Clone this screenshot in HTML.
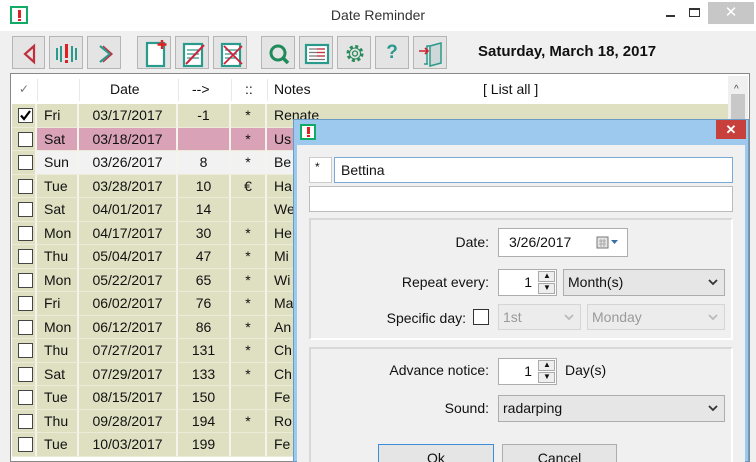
<!DOCTYPE html>
<html style="width:756px;height:462px;overflow:hidden"><head><meta charset="utf-8"><style>
*{box-sizing:border-box;margin:0;padding:0}
body{width:756px;height:462px;overflow:hidden;background:#f0f0f0;font-family:"Liberation Sans",sans-serif;font-size:14px;color:#111;position:relative}
.a{position:absolute}
.btn{position:absolute;top:36px;height:33px;background:#e4e4e4;border:1px solid #b5b5b5}
.btn svg{position:absolute;left:0;top:0}
.row{position:absolute;left:12px;width:716px;height:23.5px;background:#dfdfc2}
.row div{position:absolute;top:0;height:23.5px;line-height:23.5px;border-right:2px solid #f4f4ec;border-bottom:1px solid #ecebd8}
.cb{position:absolute;left:6px;top:4px;width:15px;height:15px;background:#fff;border:1px solid #444}
.fld{position:absolute;background:#fff;border:1px solid #adadad}
.lbl{position:absolute;text-align:right;font-size:14px}
.combo{position:absolute;background:#e6e6e6;border:1px solid #adadad;padding-left:4px;line-height:24px}
.dis{background:#ececec;border-color:#d5d5d5;color:#9a9a9a}
.chev{position:absolute;right:5px;top:0}
</style></head><body>
<div class="a" style="left:0;top:0;width:756px;height:31px;background:#fff"></div>
<div class="a" style="left:10px;top:6px;width:18px;height:18px;border:2px solid #1a6;background:#fff"><div class="a" style="left:6px;top:2px;width:3px;height:8px;background:#d22"></div><div class="a" style="left:6px;top:11px;width:3px;height:2px;background:#d22"></div></div>
<div class="a" style="left:0;top:7px;width:756px;text-align:center;font-size:14px;color:#333">Date Reminder</div>
<div class="a" style="left:666px;top:15px;width:9px;height:2px;background:#333"></div>
<div class="a" style="left:689px;top:8px;width:11px;height:9px;border:1px solid #333;border-top-width:2px"></div>
<div class="a" style="left:708px;top:2px;width:46px;height:22px;background:#c7c7c7;color:#fff;text-align:center;line-height:22px;font-size:15px">✕</div>

<div class="btn" style="left:12px;width:33px"><svg width="33" height="33"><path d="M21 9 L12 17 L21 25 Z" fill="none" stroke="#c0303c" stroke-width="2.2"/></svg></div>
<div class="btn" style="left:49px;width:34px"><svg width="34" height="33"><g stroke="#2a9a8c" stroke-width="2"><line x1="7" y1="11" x2="7" y2="23"/><line x1="11" y1="9" x2="11" y2="25"/><line x1="22" y1="9" x2="22" y2="25"/><line x1="26" y1="11" x2="26" y2="23"/></g><line x1="16.5" y1="7" x2="16.5" y2="21" stroke="#e02020" stroke-width="3"/><rect x="15" y="23" width="3" height="3" fill="#e02020"/></svg></div>
<div class="btn" style="left:87px;width:34px"><svg width="34" height="33"><path d="M12 9 L22 17 L12 25" fill="none" stroke="#2a9a8c" stroke-width="2.2"/><path d="M15 9 L24 17 L15 25" fill="none" stroke="#c0303c" stroke-width="1.4"/></svg></div>
<div class="btn" style="left:137px;width:34px"><svg width="34" height="33"><rect x="9" y="6" width="17" height="23" fill="#fff" stroke="#2a9a8c" stroke-width="2.2"/><path d="M24 3 V12 M19.5 7.5 H28.5" stroke="#e02020" stroke-width="2.4"/></svg></div>
<div class="btn" style="left:175px;width:34px"><svg width="34" height="33"><rect x="8" y="7" width="18" height="22" fill="#fff" stroke="#2a9a8c" stroke-width="2.2"/><path d="M11 13H23M11 17H23M11 21H23" stroke="#2a9a8c" stroke-width="1.2"/><line x1="10" y1="27" x2="28" y2="8" stroke="#d0203c" stroke-width="2"/></svg></div>
<div class="btn" style="left:213px;width:34px"><svg width="34" height="33"><rect x="8" y="7" width="18" height="22" fill="#fff" stroke="#2a9a8c" stroke-width="2.2"/><path d="M11 13H23M11 17H23M11 21H23" stroke="#2a9a8c" stroke-width="1.2"/><path d="M10 9L28 27M28 9L10 27" stroke="#d0203c" stroke-width="1.8"/></svg></div>
<div class="btn" style="left:261px;width:34px"><svg width="34" height="33"><circle cx="16" cy="16" r="7" fill="none" stroke="#1f8a5a" stroke-width="3"/><line x1="21" y1="21" x2="26" y2="26" stroke="#1f8a5a" stroke-width="3.5"/></svg></div>
<div class="btn" style="left:299px;width:34px"><svg width="34" height="33"><rect x="6" y="8" width="22" height="18" fill="#fff" stroke="#2a9a8c" stroke-width="2.2"/><path d="M9 12H25M9 15.5H25M9 19H25M9 22.5H25" stroke="#777" stroke-width="1.2"/><path d="M17 12H25M17 15.5H25M17 19H25" stroke="#d03040" stroke-width="1.2"/></svg></div>
<div class="btn" style="left:337px;width:34px"><svg width="34" height="33"><circle cx="17" cy="16.5" r="7" fill="none" stroke="#2a8a5a" stroke-width="3" stroke-dasharray="3 2.5"/><circle cx="17" cy="16.5" r="5.5" fill="none" stroke="#2a8a5a" stroke-width="1"/><circle cx="17" cy="16.5" r="2.5" fill="none" stroke="#2a8a5a" stroke-width="1.3"/></svg></div>
<div class="btn" style="left:375px;width:34px;text-align:center;line-height:31px;font-weight:bold;font-size:19px;color:#2a9a8c">?</div>
<div class="btn" style="left:413px;width:34px"><svg width="34" height="33"><path d="M16 27V9L27 6V26L16 29Z" fill="#cfd8d8" stroke="#2a9a8c" stroke-width="1.5"/><path d="M14 27H10M16 9H13V27" fill="none" stroke="#2a9a8c" stroke-width="1.5"/><path d="M5 14H14M11 11L14 14L11 17" fill="none" stroke="#d02030" stroke-width="1.6"/></svg></div>
<div class="a" style="left:478px;top:43px;font-weight:bold;font-size:15px;color:#111">Saturday, March 18, 2017</div>

<div class="a" style="left:10px;top:73px;width:740px;height:389px;border:1px solid #888;background:#fff"></div>
<div class="a" style="left:12px;top:76px;width:716px;height:27px;background:#fff;font-size:14px;line-height:27px">
<span class="a" style="left:7px;color:#777;font-size:12px">✓</span>
<span class="a" style="left:98px">Date</span>
<span class="a" style="left:180px">--&gt;</span>
<span class="a" style="left:233px">::</span>
<span class="a" style="left:262px">Notes</span>
<span class="a" style="left:471px">[ List all ]</span>
<div class="a" style="left:25px;top:3px;width:1px;height:22px;background:#e8e8e8"></div>
<div class="a" style="left:67px;top:3px;width:1px;height:22px;background:#e8e8e8"></div>
<div class="a" style="left:166px;top:3px;width:1px;height:22px;background:#e8e8e8"></div>
<div class="a" style="left:219px;top:3px;width:1px;height:22px;background:#e8e8e8"></div>
<div class="a" style="left:255px;top:3px;width:1px;height:22px;background:#e8e8e8"></div>
</div>
<div class="a" style="left:728px;top:76px;width:20px;height:386px;background:#f0f0f0"><div class="a" style="left:6px;top:8px;font-size:10px;color:#444">^</div><div class="a" style="left:3px;top:18px;width:14px;height:28px;background:#c8c8c8"></div></div>

<div id="rows"></div>
<script>
var d=[["Fri","03/17/2017","-1","*","Renate",1],["Sat","03/18/2017","","*","Us",2],["Sun","03/26/2017","8","*","Be",3],["Tue","03/28/2017","10","€","Ha"],["Sat","04/01/2017","14","","We"],["Mon","04/17/2017","30","*","He"],["Thu","05/04/2017","47","*","Mi"],["Mon","05/22/2017","65","*","Wi"],["Fri","06/02/2017","76","*","Ma"],["Mon","06/12/2017","86","*","An"],["Thu","07/27/2017","131","*","Ch"],["Sat","07/29/2017","133","*","Ch"],["Tue","08/15/2017","150","","Fe"],["Thu","09/28/2017","194","*","Ro"],["Tue","10/03/2017","199","","Fe"]];
var h="";
d.forEach(function(r,i){
var bg=r[5]==2?"#d9a2b6":(r[5]==3?"#f2f2f2":"#dfdfc2");
var top=104+i*23.5;
h+='<div class="row" style="top:'+top+'px">'+
'<div style="left:0;width:25px;background:#dfdfc2"></div>'+
'<div style="left:25px;width:42px;padding-left:7px;background:'+bg+'">'+r[0]+'</div>'+
'<div style="left:67px;width:99px;text-align:center;background:'+bg+'">'+r[1]+'</div>'+
'<div style="left:166px;width:53px;text-align:center;background:'+bg+'">'+r[2]+'</div>'+
'<div style="left:219px;width:36px;text-align:center;background:'+bg+'">'+r[3]+'</div>'+
'<div style="left:255px;width:461px;padding-left:7px;border-right:none;background:'+bg+'">'+r[4]+'</div>'+
'<span class="cb">'+(r[5]==1?'<svg width="13" height="13" style="position:absolute;left:0;top:0"><path d="M2 6.5L5 10L11 2" fill="none" stroke="#000" stroke-width="2.2"/></svg>':'')+'</span></div>';
});
document.getElementById("rows").innerHTML=h;
</script>

<div class="a" style="left:293px;top:119px;width:456px;height:343px;background:#9ec9ef;border:1px solid #6a9cc8"></div>
<div class="a" style="left:300px;top:124px;width:16px;height:16px;border:2px solid #1a6;background:#fff"><div class="a" style="left:5px;top:1px;width:3px;height:7px;background:#d22"></div><div class="a" style="left:5px;top:9px;width:3px;height:2px;background:#d22"></div></div>
<div class="a" style="left:716px;top:120px;width:30px;height:19px;background:#c7403b;color:#fff;text-align:center;line-height:19px;font-size:13px;font-weight:bold">✕</div>
<div class="a" style="left:297px;top:145px;width:448px;height:317px;background:#f0f0f0"></div>

<div class="fld" style="left:309px;top:157px;width:23px;height:26px;border-color:#ccc;padding:2px 0 0 5px;font-size:12px">*</div>
<div class="fld" style="left:334px;top:157px;width:399px;height:26px;border-color:#7aa8d8;padding-left:6px;line-height:24px;font-size:14px">Bettina</div>
<div class="fld" style="left:309px;top:186px;width:424px;height:26px;border-color:#bbb"></div>

<div class="a" style="left:309px;top:218px;width:424px;height:122px;border:2px solid #d8d8d8;border-right-color:#fff;border-bottom-color:#fff"></div>
<div class="lbl" style="left:380px;top:234px;width:109px">Date:</div>
<div class="fld" style="left:498px;top:228px;width:130px;height:29px;padding-left:10px;line-height:27px">3/26/2017
<svg class="a" style="left:97px;top:7px" width="26" height="14"><rect x="1" y="1" width="11" height="11" fill="#e4e4e4" stroke="#777"/><path d="M3 5H10M3 8H10M5 3V11M8 3V11" stroke="#aaa"/><path d="M15 4H22L18.5 8Z" fill="#3a6fa0"/></svg></div>
<div class="lbl" style="left:340px;top:274px;width:149px">Repeat every:</div>
<div class="fld" style="left:498px;top:269px;width:59px;height:27px;text-align:right;padding-right:24px;line-height:25px">1
<div class="a" style="left:39px;top:1px;width:17px;height:11px;border:1px solid #aaa;background:#eee"></div><div class="a" style="left:39px;top:13px;width:17px;height:11px;border:1px solid #aaa;background:#eee"></div>
<div class="a" style="left:44px;top:0;font-size:8px;line-height:12px">▲</div><div class="a" style="left:44px;top:12px;font-size:8px;line-height:12px">▼</div></div>
<div class="combo" style="left:563px;top:269px;width:162px;height:27px">Month(s)<svg class="chev" width="12" height="25"><path d="M2 10L6 14L10 10" fill="none" stroke="#333" stroke-width="1.8"/></svg></div>
<div class="lbl" style="left:340px;top:310px;width:126px">Specific day:</div>
<div class="a" style="left:473px;top:309px;width:16px;height:16px;background:#fff;border:1px solid #333"></div>
<div class="combo dis" style="left:498px;top:304px;width:83px;height:26px">1st<svg class="chev" width="12" height="25"><path d="M2 10L6 14L10 10" fill="none" stroke="#bbb" stroke-width="1.8"/></svg></div>
<div class="combo dis" style="left:587px;top:304px;width:138px;height:26px">Monday<svg class="chev" width="12" height="25"><path d="M2 10L6 14L10 10" fill="none" stroke="#bbb" stroke-width="1.8"/></svg></div>

<div class="a" style="left:309px;top:347px;width:424px;height:115px;border:2px solid #d8d8d8;border-right-color:#fff;border-bottom:none"></div>
<div class="lbl" style="left:340px;top:362px;width:149px">Advance notice:</div>
<div class="fld" style="left:498px;top:358px;width:59px;height:27px;text-align:right;padding-right:24px;line-height:25px">1
<div class="a" style="left:39px;top:1px;width:17px;height:11px;border:1px solid #aaa;background:#eee"></div><div class="a" style="left:39px;top:13px;width:17px;height:11px;border:1px solid #aaa;background:#eee"></div>
<div class="a" style="left:44px;top:0;font-size:8px;line-height:12px">▲</div><div class="a" style="left:44px;top:12px;font-size:8px;line-height:12px">▼</div></div>
<div class="a" style="left:565px;top:362px">Day(s)</div>
<div class="lbl" style="left:380px;top:400px;width:109px">Sound:</div>
<div class="combo" style="left:498px;top:395px;width:227px;height:27px">radarping<svg class="chev" width="12" height="25"><path d="M2 10L6 14L10 10" fill="none" stroke="#333" stroke-width="1.8"/></svg></div>

<div class="a" style="left:378px;top:444px;width:116px;height:30px;background:#e5e5e5;border:1px solid #3c8ed8;text-align:center;line-height:26px">Ok</div>
<div class="a" style="left:502px;top:444px;width:115px;height:30px;background:#e5e5e5;border:1px solid #adadad;text-align:center;line-height:26px">Cancel</div>
</body></html>
